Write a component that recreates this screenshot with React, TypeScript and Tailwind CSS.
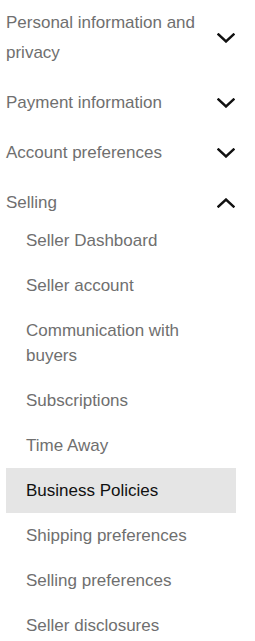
import React from "react";

type Section = { title: string; open?: boolean; items?: string[] };

const sections: Section[] = [
  { title: "Personal information and privacy" },
  { title: "Payment information" },
  { title: "Account preferences" },
  {
    title: "Selling",
    open: true,
    items: [
      "Seller Dashboard",
      "Seller account",
      "Communication with buyers",
      "Subscriptions",
      "Time Away",
      "Business Policies",
      "Shipping preferences",
      "Selling preferences",
      "Seller disclosures",
    ],
  },
];

function Chevron({ up }: { up?: boolean }) {
  return (
    <svg width="18" height="10" viewBox="0 0 18 10" className="mr-[1px] shrink-0" aria-hidden>
      <path
        d={up ? "M1.5 8.5 L9 1.5 L16.5 8.5" : "M1.5 1.5 L9 8.5 L16.5 1.5"}
        fill="none"
        stroke="#111"
        strokeWidth="2.4"
        strokeLinecap="square"
      />
    </svg>
  );
}

export default function App() {
  const active = "Business Policies";
  return (
    <nav className="ml-[6px] w-[230px] font-['Liberation_Sans',Arial,sans-serif] text-[17px] text-[#6f6f6f]">
      {sections.map((s) => (
        <div key={s.title} className="pt-2 pb-3">
          <button className="flex w-full items-center justify-between text-left leading-[30px]">
            <span className="max-w-[205px]">{s.title}</span>
            <Chevron up={s.open} />
          </button>
          {s.open && s.items && (
            <ul>
              {s.items.map((item) => (
                <li key={item}>
                  <a
                    href="#"
                    className={`block py-[10px] pl-5 pr-5 leading-[25px] ${
                      item === active ? "bg-[#e5e5e5] text-[#111]" : ""
                    }`}
                  >
                    {item}
                  </a>
                </li>
              ))}
            </ul>
          )}
        </div>
      ))}
    </nav>
  );
}
